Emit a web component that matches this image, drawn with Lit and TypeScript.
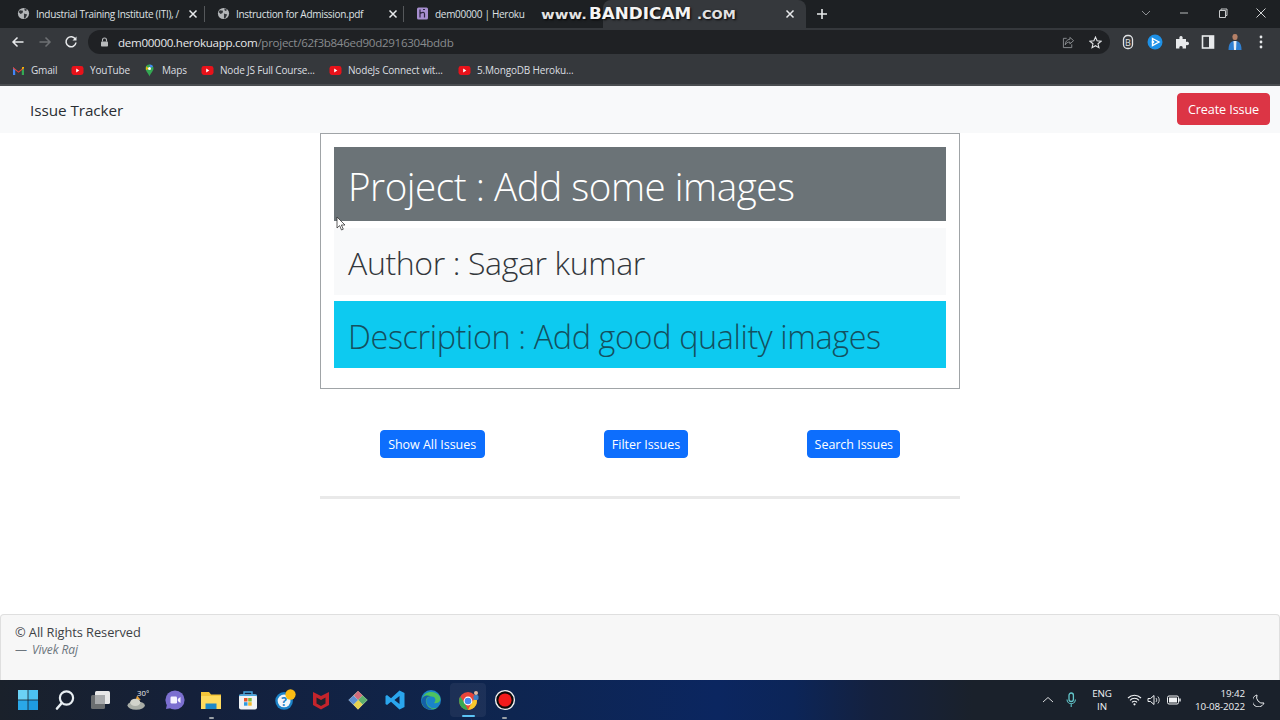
import { LitElement, html, css, svg } from "lit";
import { customElement } from "lit/decorators.js";

const globe = svg`<svg class="fav" viewBox="0 0 14 14"><circle cx="7" cy="7" r="6" fill="#b4b7b9"/><path d="M3 3.5 L6.5 4 L6 6.5 L3.8 7.5 L1.8 5.5Z M7.5 7 L11 8 L9 12 L7.5 12.5Z M8 1.6 L11 3 L9.5 4.2 L8 3.5Z" fill="#33363a"/></svg>`;
const yt = svg`<svg class="bm-ic" viewBox="0 0 13 13"><rect x="0.5" y="2" width="12" height="9" rx="2.4" fill="#e8121a"/><path d="M5.2 4.6 L8.3 6.5 L5.2 8.4Z" fill="#fff"/></svg>`;
const gmail = svg`<svg class="bm-ic" viewBox="0 0 13 13"><path d="M1 3 V11 H3.2 V5.5Z" fill="#4285f4"/><path d="M12 3 V11 H9.8 V5.5Z" fill="#34a853"/><path d="M1 3 L6.5 7.4 L12 3 L12 4.4 L6.5 8.8 L1 4.4Z" fill="#ea4335"/><path d="M12 3 L10.2 3 L9.8 5.5 L12 4Z" fill="#fbbc04"/></svg>`;
const maps = svg`<svg class="bm-ic" viewBox="0 0 13 13"><path d="M6.5 0.5 C3.9 0.5 2.5 2.5 2.5 4.4 C2.5 7 5.4 9 6.5 12.5 C7.6 9 10.5 7 10.5 4.4 C10.5 2.5 9.1 0.5 6.5 0.5Z" fill="#34a853"/><path d="M3.3 2.3 L6 4.8 L3 6Z" fill="#fbbc04"/><path d="M6.5 0.5 C8 .5 9.3 1.2 10 2.4 L7.5 4Z" fill="#4285f4"/><circle cx="6.5" cy="4.4" r="1.5" fill="#fff"/></svg>`;

const bookmarks = [
  { icon: gmail, label: "Gmail", w: 59 },
  { icon: yt, label: "YouTube", w: 72 },
  { icon: maps, label: "Maps", w: 58 },
  { icon: yt, label: "Node JS Full Course...", w: 128 },
  { icon: yt, label: "NodeJs Connect wit...", w: 129 },
  { icon: yt, label: "5.MongoDB Heroku...", w: 120 },
];

const task = [
  svg`<svg viewBox="0 0 22 22"><rect x="1" y="1" width="9.6" height="9.6" fill="#6bd2f5"/><rect x="11.4" y="1" width="9.6" height="9.6" fill="#4cc2f1"/><rect x="1" y="11.4" width="9.6" height="9.6" fill="#2aa8e8"/><rect x="11.4" y="11.4" width="9.6" height="9.6" fill="#1e9be0"/></svg>`,
  svg`<svg viewBox="0 0 22 22"><circle cx="12.5" cy="9" r="6.6" fill="none" stroke="#e8eef2" stroke-width="2.2"/><path d="M7.8 14 L3 19.5" stroke="#e8eef2" stroke-width="2.6" stroke-linecap="round"/></svg>`,
  svg`<svg viewBox="0 0 22 22"><rect x="1" y="6" width="14" height="14" rx="1.5" fill="#6b6e70"/><rect x="5" y="2" width="15" height="13" rx="1.5" fill="#e8e8e8"/><rect x="5" y="6" width="10" height="9" fill="#a8aaac"/></svg>`,
  svg`<svg viewBox="0 0 24 24"><path d="M9 13 L11 7 L15 12Z" fill="#e8a13a"/><ellipse cx="10" cy="18" rx="9.5" ry="4.5" fill="#a9ada6"/><ellipse cx="9" cy="14.5" rx="5.5" ry="4" fill="#d2d3cb"/><text x="11" y="8" font-size="8.5" fill="#eee" font-family="Open Sans">30°</text></svg>`,
  svg`<svg viewBox="0 0 22 22"><circle cx="11" cy="11" r="9.6" fill="#7b6fd0"/><path d="M3 15 L2 20 L8 19Z" fill="#7b6fd0"/><rect x="6.5" y="7.5" width="6.5" height="7" rx="1.2" fill="#f4f2ff"/><path d="M13.8 10 L16.5 8 V14 L13.8 12Z" fill="#f4f2ff"/></svg>`,
  svg`<svg viewBox="0 0 22 22"><path d="M1 3 H9 L11 5.5 H21 V20 H1Z" fill="#f5c63a"/><path d="M1 7 H21 V20 H1Z" fill="#ffdb5e"/><rect x="5.5" y="14.5" width="11" height="5.5" fill="#1c88c8"/></svg>`,
  svg`<svg viewBox="0 0 22 22"><rect x="2" y="5.5" width="18" height="15" rx="2" fill="#f0f3f5"/><path d="M7 6 V3 H15 V6" fill="none" stroke="#47a7df" stroke-width="1.4"/><path d="M2 7 V6 Q2 5.5 3 5.5 H19 Q20 5.5 20 6 V7Z" fill="#47a7df"/><rect x="7" y="9" width="3.5" height="3.5" fill="#e8552b"/><rect x="11.2" y="9" width="3.5" height="3.5" fill="#7fb93b"/><rect x="7" y="13.2" width="3.5" height="3.5" fill="#2e9be0"/><rect x="11.2" y="13.2" width="3.5" height="3.5" fill="#f5b92a"/></svg>`,
  svg`<svg viewBox="0 0 24 24"><circle cx="11" cy="13" r="9.6" fill="#1c83c8"/><circle cx="11" cy="13" r="7" fill="#f1f6fa"/><text x="11" y="18" text-anchor="middle" font-size="13" font-weight="700" fill="#1c83c8" font-family="Open Sans">?</text><circle cx="18" cy="6" r="5.6" fill="#fbbc13"/></svg>`,
  svg`<svg viewBox="0 0 22 22"><path d="M3 3 L11 7 L19 3 V16 L11 20.5 L3 16Z" fill="#c4242c"/><path d="M6.5 8.5 L11 11 L15.5 8.5 V14.5 L11 17 L6.5 14.5Z" fill="#1b2430"/></svg>`,
  svg`<svg viewBox="0 0 22 22"><path d="M11 2 L20.5 11 L11 20.5 L1.5 11Z" fill="#e9e4c0"/><path d="M11 2 L15.5 6.5 L11 11 L7 6.5Z" fill="#d36c7c"/><path d="M11 11 L15.5 6.5 L20.5 11 L15.5 15.5Z" fill="#5fb06e"/><path d="M11 11 L15.5 15.5 L11 20.5 L6.5 15.5Z" fill="#e6d24f"/><path d="M1.5 11 L6.5 6.5 L11 11 L6.5 15.5Z" fill="#5f8fd2"/></svg>`,
  svg`<svg viewBox="0 0 22 22"><path d="M15.5 1.5 L20.5 4 V18 L15.5 20.5 L7 12.8 L3 16 L1.5 15 V7 L3 6 L7 9.2Z M15.5 7 L10.4 11 L15.5 15Z" fill="#2aa6ee" fill-rule="evenodd"/></svg>`,
  svg`<svg viewBox="0 0 22 22"><circle cx="11" cy="11" r="10" fill="#1a84c9"/><path d="M3 8 C5 2 16 0.5 20 8 C21.5 12 18 15 14 14 C17 11 15 7 11 7.5 C7 8 5 11 7 15 C9 19 14 20.5 18 18 C14 22 5 22 2 15 C1.5 12 2 10 3 8Z" fill="#4ec35f"/><path d="M1.5 12 C2 7 7 5 11 7.5 C6.5 7 4.8 11 6.5 15 C8 19 12 20.5 15 20 C9 22.5 2 19 1.5 12Z" fill="#1560a8"/></svg>`,
  svg`<svg viewBox="0 0 22 22"><circle cx="11" cy="12" r="9" fill="#e8453a"/><path d="M19 8 A9 9 0 0 1 11 21 L15 13Z" fill="#f8c92c"/><path d="M3.2 7.6 A9 9 0 0 0 11 21 L7 13Z" fill="#38a853"/><circle cx="11" cy="12" r="4.4" fill="#fff"/><circle cx="11" cy="12" r="3.3" fill="#4689f2"/><circle cx="19" cy="4" r="2" fill="#e0b9a0"/><rect x="16.5" y="6" width="5" height="5" rx="1.5" fill="#3b7fc4"/></svg>`,
  svg`<svg viewBox="0 0 22 22"><circle cx="11" cy="11" r="9.4" fill="#0b0b0b" stroke="#f2f2f2" stroke-width="1.4"/><circle cx="11" cy="11" r="6.6" fill="#f21b1b"/></svg>`,
];

@customElement("app-root")
export class AppRoot extends LitElement {
  static styles = css`
    :host { display: block; width: 1280px; height: 720px; position: relative; overflow: hidden; font-family: "Open Sans", "Noto Sans", sans-serif; background: #fff; }
    .page { display: flex; flex-direction: column; height: 720px; }
    .tabs { height: 28px; background: #1d2023; display: flex; color: #dfe1e3; font-size: 10px; letter-spacing: -0.3px; flex: none; }
    .tab { display: flex; align-items: center; position: relative; height: 28px; flex: none; box-sizing: border-box; padding-bottom: 1px; }
    .t1 { width: 205px; padding-left: 17px; }
    .t2 { width: 199px; padding-left: 12px; }
    .t3 { width: 199px; padding-left: 12px; }
    .t4 { width: 203px; background: #35383c; border-radius: 8px 8px 0 0; justify-content: flex-end; }
    .fav { width: 13px; height: 13px; margin-right: 6px; flex: none; }
    .ttl { flex: 1; white-space: nowrap; overflow: hidden; }
    .x { width: 12px; height: 12px; flex: none; margin-right: 10px; }
    .t1 .x { margin-right: 6px; }
    .t2 .x { margin-right: 5px; }
    .sep { width: 1px; height: 16px; background: #55585b; position: absolute; right: 0; top: 6px; }
    .plus { width: 12px; height: 12px; margin: 8px 0 0 10px; flex: none; }
    .win { margin-left: auto; display: flex; align-items: center; padding-bottom: 3px; }
    .win svg { width: 12px; height: 12px; flex: none; }
    .win .w1 { margin-right: 26px; }
    .win .w2 { margin-right: 27px; }
    .win .w3 { margin-right: 26px; }
    .win .w4 { margin-right: 13px; }

    .bar { height: 30px; background: #35383c; display: flex; align-items: center; flex: none; box-sizing: border-box; padding-bottom: 2px; }
    .nav { width: 14px; height: 14px; flex: none; }
    .nav.back { margin-left: 11px; }
    .nav.fwd { margin-left: 13px; }
    .nav.rel { margin-left: 12px; }
    .omni { width: 1022px; height: 24px; margin-left: 10px; background: #1f2124; border-radius: 12px; display: flex; align-items: center; flex: none; box-sizing: border-box; padding-left: 12px; font-size: 11.6px; letter-spacing: -0.3px; color: #e6e8ea; }
    .omni .lock { width: 9px; height: 10px; margin-right: 9px; flex: none; }
    .omni .dim { color: #888b8e; }
    .omni .r { margin-left: auto; display: flex; align-items: center; gap: 14px; padding-right: 8px; }
    .omni .r svg { width: 13px; height: 13px; }
    .ext { display: flex; align-items: center; margin-left: 10px; gap: 10.8px; }
    .ext svg { width: 16px; height: 16px; flex: none; }
    .ext .dots { width: 4px; margin-left: 5px; }

    .bms { background: #35383c; display: flex; align-items: center; padding: 0 0 2px 12px; box-sizing: content-box; height: 24px; flex: none; border-bottom: 2px solid #4a4d50; color: #dcdfe1; font-size: 10px; letter-spacing: -0.17px; }
    .bm { display: flex; align-items: center; flex: none; white-space: nowrap; }
    .bm-ic { width: 13px; height: 13px; margin-right: 6px; flex: none; }

    .navbar { height: 47px; background: #f8f9fa; display: flex; align-items: center; justify-content: space-between; padding: 0 10px 0 30px; flex: none; box-sizing: border-box; }
    .brand { font-size: 15.3px; color: #2a2e33; letter-spacing: -0.07px; }
    .btn { border: 1px solid; border-radius: 4px; color: #fff; font: inherit; font-size: 12.5px; letter-spacing: -0.03px; display: flex; align-items: center; justify-content: center; box-sizing: border-box; padding: 0; }
    .create { background: #dc3545; border-color: #dc3545; width: 93px; height: 32px; font-size: 12.6px; letter-spacing: -0.1px; margin-bottom: 2px; padding-top: 2px; }
    main { flex: 1; display: flex; flex-direction: column; align-items: center; min-height: 0; }
    .col { width: 640px; }
    .card { border: 1px solid #a0a4a7; padding: 13px 13px 20px; box-sizing: border-box; height: 256px; display: flex; flex-direction: column; }
    .row { font-weight: 300; display: flex; align-items: center; padding: 2px 0 0 14px; box-sizing: border-box; flex: none; white-space: nowrap; }
    .r1 { height: 74px; background: #6b7377; color: #fff; font-size: 38.6px; letter-spacing: -0.46px; padding-top: 3px; }
    .r2 { height: 67px; margin-top: 7px; background: #f8f9fa; color: #33373c; font-size: 32.1px; letter-spacing: -0.39px; }
    .r3 { height: 67px; margin-top: 6px; background: #0dcaf0; color: #14505f; font-size: 32.4px; letter-spacing: -0.39px; }
    .actions { display: flex; justify-content: space-around; margin-top: 41px; }
    .blue { background: #0d6efd; border-color: #0d6efd; height: 28px; }
    .b1 { width: 105px; } .b2 { width: 84px; } .b3 { width: 93px; }
    hr { border: 0; height: 3px; background: #e9e9e9; margin: 38px 0 0; }
    footer { height: 66px; background: #f7f7f7; border: 1px solid #dfdfdf; border-bottom: 0; border-radius: 4px 4px 0 0; padding: 8px 14px; box-sizing: border-box; flex: none; }
    .c1 { font-size: 12.8px; color: #3d4145; line-height: 18px; letter-spacing: -0.05px; }
    .c2 { font-size: 12px; color: #6c757d; line-height: 18px; display: flex; }
    .c2 .dash { width: 17px; flex: none; overflow: hidden; }
    .c2 i { letter-spacing: -0.1px; }

    .taskbar { height: 40px; flex: none; background: linear-gradient(90deg, #1a212b 0%, #14203a 15%, #0e2550 40%, #0b2660 56%, #0c2558 62%, #14213f 68%, #1a212b 76%, #1a212b 100%); display: flex; align-items: center; color: #eef0f2; box-sizing: border-box; padding-left: 9.5px; }
    .ti { width: 36.7px; height: 40px; display: flex; align-items: center; justify-content: center; position: relative; flex: none; }
    .ti svg { width: 22px; height: 22px; }
    .ti.active { background: rgba(255,255,255,0.06); border-radius: 4px; height: 34px; }
    .ti .dot { position: absolute; bottom: 1px; left: 50%; width: 5px; margin-left: -2.5px; height: 2px; background: #9aa0a6; border-radius: 1px; }
    .ti.active .dot { width: 13px; margin-left: -6.5px; bottom: 0; background: #5cc4f5; }
    .tray { margin-left: auto; display: flex; align-items: center; font-size: 9.8px; letter-spacing: -0.1px; }
    .tray svg { flex: none; }
    .lang { width: 28px; text-align: center; line-height: 13px; margin-left: 11px; }
    .clock { text-align: right; line-height: 13px; margin-left: 4px; width: 60px; }
    .wm { position: absolute; left: 541px; top: 5px; color: #e2e2e2; font-weight: 700; text-shadow: 1px 1px 2px #000; font-family: "DejaVu Sans", sans-serif; white-space: nowrap; display: flex; align-items: baseline; }
    .wm span { display: inline-block; transform-origin: left center; }
    .wm .a { font-size: 13px; width: 48px; transform: scaleX(1.14); }
    .wm .b { font-size: 15px; width: 108px; color: #f4f4f4; transform: scaleX(1.12); }
    .wm .c { font-size: 11.5px; width: 40px; transform: scaleX(1.14); }
    .cursor { position: absolute; left: 336px; top: 216px; width: 10px; height: 15px; }
  `;

  render() {
    const x = svg`<svg class="x" viewBox="0 0 12 12"><path d="M2.5 2.5 L9.5 9.5 M9.5 2.5 L2.5 9.5" stroke="#e8eaec" stroke-width="1.5"/></svg>`;
    return html`<div class="page">
      <div class="tabs">
        <div class="tab t1">${globe}<span class="ttl">Industrial Training Institute (ITI), /</span>${x}<span class="sep"></span></div>
        <div class="tab t2">${globe}<span class="ttl">Instruction for Admission.pdf</span>${x}<span class="sep"></span></div>
        <div class="tab t3"><svg class="fav" viewBox="0 0 13 13"><rect x="1" y="0.5" width="11" height="12" rx="1.5" fill="#a78fd0"/><path d="M4 2.5 V10.5 M4 6.5 Q8.5 4 8.5 7 V10.5 M7 2.5 H9" stroke="#2d2540" stroke-width="1.2" fill="none"/></svg><span class="ttl">dem00000 | Heroku</span></div>
        <div class="tab t4">${x}</div>
        <svg class="plus" viewBox="0 0 12 12"><path d="M6 1 V11 M1 6 H11" stroke="#e8eaec" stroke-width="1.6"/></svg>
        <div class="win">
          <svg class="w1" viewBox="0 0 12 12"><path d="M2 4 L6 8 L10 4" fill="none" stroke="#8d9093" stroke-width="1"/></svg>
          <svg class="w2" viewBox="0 0 12 12"><path d="M2 6 H10" stroke="#b8babc" stroke-width="1"/></svg>
          <svg class="w3" viewBox="0 0 12 12"><path d="M2.5 3.5 H8.5 V10.5 H2.5Z M4 3.5 V2 H10 V8.5 H8.5" fill="none" stroke="#c8cacc" stroke-width="1"/></svg>
          <svg class="w4" viewBox="0 0 12 12"><path d="M1.5 1.5 L10.5 10.5 M10.5 1.5 L1.5 10.5" stroke="#d0d2d4" stroke-width="1"/></svg>
        </div>
      </div>
      <div class="bar">
        <svg class="nav back" viewBox="0 0 14 14"><path d="M12.5 7 H2 M6.5 2.5 L2 7 L6.5 11.5" fill="none" stroke="#e8eaec" stroke-width="1.5"/></svg>
        <svg class="nav fwd" viewBox="0 0 14 14"><path d="M1.5 7 H12 M7.5 2.5 L12 7 L7.5 11.5" fill="none" stroke="#6d7073" stroke-width="1.5"/></svg>
        <svg class="nav rel" viewBox="0 0 14 14"><path d="M11.5 4.5 A5 5 0 1 0 12 7.5" fill="none" stroke="#e8eaec" stroke-width="1.5"/><path d="M12.5 1.5 V5.5 H8.5Z" fill="#e8eaec"/></svg>
        <div class="omni">
          <svg class="lock" viewBox="0 0 9 10"><path d="M2.5 4.5 V3 A2 2 0 0 1 6.5 3 V4.5" fill="none" stroke="#b8babc" stroke-width="1.1"/><rect x="1" y="4.5" width="7" height="5" rx="0.8" fill="#b8babc"/></svg>
          <span>dem00000.herokuapp.com<span class="dim">/project/62f3b846ed90d2916304bddb</span></span>
          <div class="r">
            <svg viewBox="0 0 14 14"><path d="M8.5 1.5 L12.5 5 L8.5 8.5 V6.5 C6 6.5 4.5 7.5 3.5 9.5 C3.5 6 5.5 3.8 8.5 3.5Z M5 2.5 H1.5 V12.5 H10.5 V9" fill="none" stroke="#8d9093" stroke-width="1"/></svg>
            <svg viewBox="0 0 14 14"><path d="M7 1.2 L8.7 5.2 L13 5.6 L9.7 8.4 L10.7 12.6 L7 10.4 L3.3 12.6 L4.3 8.4 L1 5.6 L5.3 5.2Z" fill="none" stroke="#e0e2e4" stroke-width="1.2"/></svg>
          </div>
        </div>
        <div class="ext">
          <svg viewBox="0 0 16 16"><rect x="3.5" y="1.5" width="9" height="13" rx="4" fill="none" stroke="#e0e2e4" stroke-width="1.3"/><text x="8" y="11.5" text-anchor="middle" font-size="9" fill="#e0e2e4" font-family="Open Sans">B</text></svg>
          <svg viewBox="0 0 16 16"><circle cx="8" cy="8" r="7.5" fill="#1d90e6"/><path d="M5.5 4.5 L12 8 L5.5 11.5Z" fill="none" stroke="#fff" stroke-width="1.4"/><circle cx="6" cy="8" r="1.3" fill="#fff"/></svg>
          <svg viewBox="0 0 16 16"><path d="M2 5 H5.5 C5 3.5 5.5 2 7 2 C8.5 2 9 3.5 8.5 5 H12 V8 C13.5 7.5 15 8 15 9.5 C15 11 13.5 11.5 12 11 V14.5 H8.5 C9 13 8.5 12 7 12 C5.5 12 5 13 5.5 14.5 H2Z" fill="#e8eaec"/></svg>
          <svg viewBox="0 0 16 16"><rect x="2.5" y="2" width="11" height="12" fill="none" stroke="#e8eaec" stroke-width="1.6"/><rect x="9" y="2" width="4.5" height="12" fill="#e8eaec"/></svg>
          <svg viewBox="0 0 16 16"><rect x="5.5" y="0" width="5" height="6" rx="2.2" fill="#b58067"/><path d="M1.5 16 C1.5 8 5 7 8 7 C11 7 14.5 8 14.5 16Z" fill="#2f7fd0"/><path d="M6.5 7 L9.5 7 L9 16 L7 16Z" fill="#e8eef4"/></svg>
          <svg class="dots" viewBox="0 0 4 16"><circle cx="2" cy="3" r="1.4" fill="#e8eaec"/><circle cx="2" cy="8" r="1.4" fill="#e8eaec"/><circle cx="2" cy="13" r="1.4" fill="#e8eaec"/></svg>
        </div>
      </div>
      <div class="bms">${bookmarks.map((b) => html`<div class="bm" style="width:${b.w}px">${b.icon}<span>${b.label}</span></div>`)}</div>
      <div class="navbar"><span class="brand">Issue Tracker</span><button class="btn create">Create Issue</button></div>
      <main>
        <div class="col">
          <div class="card">
            <div class="row r1">Project : Add some images</div>
            <div class="row r2">Author : Sagar kumar</div>
            <div class="row r3">Description : Add good quality images</div>
          </div>
          <div class="actions">
            <button class="btn blue b1">Show All Issues</button>
            <button class="btn blue b2">Filter Issues</button>
            <button class="btn blue b3">Search Issues</button>
          </div>
          <hr />
        </div>
      </main>
      <footer>
        <div class="c1">© All Rights Reserved</div>
        <div class="c2"><span class="dash">—</span><i>Vivek Raj</i></div>
      </footer>
      <div class="taskbar">
        ${task.map((t, i) => html`<div class="ti ${i === 12 ? "active" : ""}">${t}${i === 5 || i === 12 || i === 13 ? html`<span class="dot"></span>` : ""}</div>`)}
        <div class="tray">
          <svg width="12" height="12" viewBox="0 0 12 12"><path d="M1 8 L6 3.5 L11 8" fill="none" stroke="#d8dadc" stroke-width="1"/></svg>
          <svg style="margin-left:11px" width="12" height="16" viewBox="0 0 12 16"><rect x="4" y="1" width="4.4" height="8.5" rx="2.2" fill="none" stroke="#62c5c9" stroke-width="1.3"/><path d="M2 7.5 A4.2 4.2 0 0 0 10.4 7.5 M6.2 12 V15" fill="none" stroke="#62c5c9" stroke-width="1.1"/></svg>
          <div class="lang">ENG<br />IN</div>
          <svg style="margin-left:11px" width="15" height="12" viewBox="0 0 15 12"><path d="M1 4 A9 9 0 0 1 14 4 M3 6.3 A6 6 0 0 1 12 6.3 M5 8.4 A3.2 3.2 0 0 1 10 8.4" fill="none" stroke="#eef0f2" stroke-width="1.1"/><circle cx="7.5" cy="10.3" r="1.1" fill="#eef0f2"/></svg>
          <svg style="margin-left:5px" width="14" height="12" viewBox="0 0 14 12"><path d="M1 4.5 H3.5 L7 1.5 V10.5 L3.5 7.5 H1Z" fill="none" stroke="#eef0f2" stroke-width="1"/><path d="M9 4 A3 3 0 0 1 9 8 M10.8 2.5 A5 5 0 0 1 10.8 9.5" fill="none" stroke="#c5c8ca" stroke-width="1"/></svg>
          <svg style="margin-left:6px" width="14" height="10" viewBox="0 0 14 10"><rect x="0.5" y="1" width="11" height="8" rx="1.5" fill="#1a2029" stroke="#eef0f2"/><rect x="2" y="2.5" width="8" height="5" fill="#eef0f2"/><rect x="12.3" y="3.5" width="1.4" height="3" fill="#eef0f2"/></svg>
          <div class="clock">19:42<br />10-08-2022</div>
          <svg style="margin:0 15px 0 8px" width="12" height="13" viewBox="0 0 12 13"><path d="M4 1 A6 6 0 1 0 11 9 A6 6 0 0 1 4 1Z" fill="none" stroke="#eef0f2" stroke-width="1"/></svg>
        </div>
      </div>
      <div class="wm"><span class="a">www.</span><span class="b">BANDICAM</span><span class="c">.COM</span></div>
      <svg class="cursor" viewBox="0 0 10 15"><path d="M1 1 L1 12 L3.6 9.6 L5.5 14 L7.3 13.2 L5.4 9 L9 9Z" fill="#fff" stroke="#333" stroke-width="0.8"/></svg>
    </div>`;
  }
}
